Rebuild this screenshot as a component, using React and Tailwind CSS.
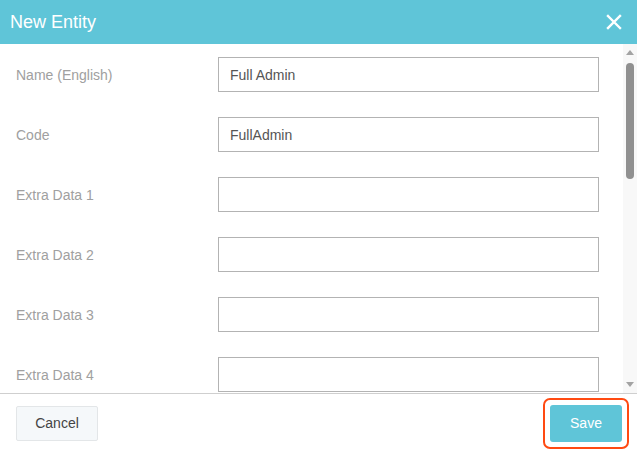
import React from "react";

const fields = [
  { label: "Name (English)", value: "Full Admin" },
  { label: "Code", value: "FullAdmin" },
  { label: "Extra Data 1", value: "" },
  { label: "Extra Data 2", value: "" },
  { label: "Extra Data 3", value: "" },
  { label: "Extra Data 4", value: "" },
];

const App = () => {
  return (
    <div
      className="w-[637px] h-[452px] bg-white flex flex-col overflow-hidden"
      style={{ fontFamily: '"Liberation Sans", Arial, sans-serif' }}
    >
      {/* Header */}
      <div className="h-[44px] shrink-0 bg-[#5fc5d8] flex items-center justify-between pl-[10px] pr-[15px]">
        <h2 className="text-[18px] text-white leading-none">New Entity</h2>
        <svg width="16" height="16" viewBox="0 0 16 16" className="text-white">
          <path d="M2 2 L14 14 M14 2 L2 14" stroke="currentColor" strokeWidth="2.4" strokeLinecap="square" />
        </svg>
      </div>

      {/* Body */}
      <div className="h-[349px] shrink-0 flex">
        <div className="flex-1 overflow-hidden pt-[13px] pl-[16px] pr-[24px]">
          {fields.map((f) => (
            <div key={f.label} className="flex items-center h-[35px] mb-[25px]">
              <label className="w-[202px] shrink-0 pt-[2px] text-[14px] text-[#a0a0a0]">{f.label}</label>
              <input
                readOnly
                value={f.value}
                className="w-[381px] h-[35px] border border-[#b3b3b3] px-[11px] text-[14px] text-[#555] outline-none"
                style={{ fontFamily: '"Liberation Sans", Arial, sans-serif' }}
              />
            </div>
          ))}
        </div>
        {/* Scrollbar */}
        <div className="w-[14px] shrink-0 bg-[#f8f8f8] flex flex-col items-center">
          <svg width="8" height="5" viewBox="0 0 8 5" className="mt-[6px]">
            <path d="M4 0 L8 5 L0 5 Z" fill="#a3a3a3" />
          </svg>
          <div className="w-[8px] h-[116px] mt-[8px] rounded-full bg-[#909090]"></div>
          <div className="flex-1"></div>
          <svg width="8" height="5" viewBox="0 0 8 5" className="mb-[6px]">
            <path d="M0 0 L8 0 L4 5 Z" fill="#a3a3a3" />
          </svg>
        </div>
      </div>

      {/* Footer */}
      <div className="flex-1 border-t border-[#cfcfcf] flex items-center justify-between pl-[16px] pr-[8px]">
        <button className="w-[82px] h-[35px] leading-none bg-[#f5f8fa] border border-[#e3e6e8] rounded-[2px] text-[14px] text-[#444]">
          Cancel
        </button>
        <div className="p-[5px] border-2 border-[#ff4a12] rounded-[7px]">
          <button className="w-[72px] h-[37px] leading-none bg-[#5fc5d8] rounded-[3px] text-[14px] text-white">
            Save
          </button>
        </div>
      </div>
    </div>
  );
};

export default App;
